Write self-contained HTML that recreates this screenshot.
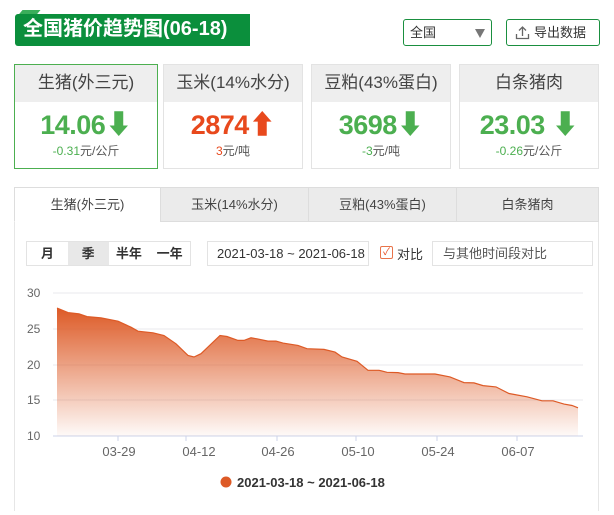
<!DOCTYPE html>
<html><head><meta charset="utf-8"><style>
*{box-sizing:border-box;margin:0;padding:0}
body{width:614px;height:515px;background:#fff;font-family:"Liberation Sans","Noto Sans CJK SC",sans-serif;position:relative;overflow:hidden;color:#333}
.a{position:absolute}
.banner{left:15px;top:14px;width:235px;height:32px;background:#0b8f3c;border-radius:3px 0 0 3px;color:#fff;font-weight:bold;font-size:20px;line-height:30px;padding-left:8px}
.fold{left:20px;top:10px;width:18px;height:6px;background:#3aae5a;transform:skewX(-40deg)}
.sel{left:403px;top:19px;width:89px;height:27px;border:1px solid #1a8f3f;border-radius:3px;font-size:13px;line-height:25px;padding-left:6px}
.tri{right:6px;top:9px;border-left:5px solid transparent;border-right:5px solid transparent;border-top:9px solid #777}
.exp{left:506px;top:19px;width:94px;height:27px;border:1px solid #1a8f3f;border-radius:3px;font-size:13px;line-height:25px;padding-left:27px}
.card{top:64px;height:105px;border:1px solid #e3e3e3;text-align:center}
.card .h{height:37px;background:#eeeeee;font-size:17px;line-height:36px;color:#444}
.card .v{font-size:27px;font-weight:bold;margin-top:8px;line-height:30px;letter-spacing:-0.5px}
.card .s{font-size:12px;color:#555;margin-top:2px}
.g{color:#4caf50}.r{color:#e8491d}
.tab{top:187px;height:35px;background:#ebebeb;border:1px solid #ddd;font-size:13px;text-align:center;line-height:34px;color:#444}
.box{left:14px;top:221px;width:585px;height:290px;border:1px solid #e6e6e6;border-bottom:none}
.bg{left:26px;top:241px;width:165px;height:25px;border:1px solid #e3e3e3;font-size:13px;font-weight:bold;display:flex}
.bg span{flex:1;text-align:center;line-height:23px}
.inp{top:241px;height:25px;border:1px solid #e3e3e3;font-size:13px;line-height:23px;padding-left:8px}
</style></head><body>
<div class="a fold"></div>
<div class="a banner">全国猪价趋势图(06-18)</div>
<div class="a sel">全国<div class="a tri"></div></div>
<div class="a exp"><svg class="a" style="left:8px;top:5px" width="15" height="15" viewBox="0 0 15 15" fill="none" stroke="#666" stroke-width="1.3"><path d="M7.5 11V2M4 5.5L7.5 2 11 5.5M1.5 9v4.5h12V9"/></svg>导出数据</div>

<div class="a card" style="left:14px;width:144px;border-color:#4caf50"><div class="h">生猪(外三元)</div><div class="v g">14.06⬇</div><div class="s"><span class="g">-0.31</span>元/公斤</div></div>
<div class="a card" style="left:163px;width:140px"><div class="h">玉米(14%水分)</div><div class="v r">2874⬆</div><div class="s"><span class="r">3</span>元/吨</div></div>
<div class="a card" style="left:311px;width:140px"><div class="h">豆粕(43%蛋白)</div><div class="v g">3698⬇</div><div class="s"><span class="g">-3</span>元/吨</div></div>
<div class="a card" style="left:459px;width:140px"><div class="h">白条猪肉</div><div class="v g">23.03 ⬇</div><div class="s"><span class="g">-0.26</span>元/公斤</div></div>

<div class="a box"></div>
<div class="a tab" style="left:14px;width:147px;background:#fff;border-bottom-color:#fff">生猪(外三元)</div>
<div class="a tab" style="left:160px;width:149px">玉米(14%水分)</div>
<div class="a tab" style="left:308px;width:149px">豆粕(43%蛋白)</div>
<div class="a tab" style="left:456px;width:143px">白条猪肉</div>

<div class="a bg"><span>月</span><span style="background:#e8e8e8">季</span><span>半年</span><span>一年</span></div>
<div class="a inp" style="left:207px;width:162px;padding-left:9px">2021-03-18 ~ 2021-06-18</div>
<div class="a" style="left:380px;top:246px;width:13px;height:13px;border:1px solid #e8734a;border-radius:2px;color:#e8491d;font-size:10px;line-height:11px;text-align:center">✓</div>
<div class="a" style="left:397px;top:244px;font-size:13px">对比</div>
<div class="a inp" style="left:432px;width:161px;padding-left:10px;color:#555">与其他时间段对比</div>

<svg class="a" style="left:0;top:280px" width="614" height="235">
<defs><linearGradient id="gr" x1="0" y1="0" x2="0" y2="1"><stop offset="0" stop-color="#dd5a26"/><stop offset="1" stop-color="#dd5a26" stop-opacity="0.03"/></linearGradient></defs>
<g font-size="12" fill="#666" font-family="Liberation Sans,sans-serif">
<text x="27" y="17">30</text><text x="27" y="53">25</text><text x="27" y="89">20</text><text x="27" y="124">15</text><text x="27" y="160">10</text>
</g>
<g stroke="#e8e8ee" stroke-width="1"><path d="M53 13H583M53 49H583M53 85H583M53 120H583"/></g>
<path d="M53 156H583" stroke="#ccd3e8"/>
<g stroke="#ccd3e8"><path d="M118 156v5M186 156v5M277 156v5M356 156v5M437 156v5M517 156v5"/></g>
<g transform="translate(0,-280)">
<path d="M57 308L68 312.6 79 313.9 87 316.6 101 317.9 118 321.2 131 327.2 138 331.2 153 332.8 164 335.5 176 343.8 188 355.4 194 357 201 353.7 220 335.5 227 336.5 238 340.4 244 340.4 251 337.8 257 338.8 268 341.1 276 341.1 283 343.1 298 345.4 307 348.7 324 349.4 335 352.1 342 357 357 361.3 368 370.3 379 370.3 387 372.3 398 372.6 405 374 435 374 450 376.9 464 382.6 474 382.9 483 385.6 496 386.9 509 393.5 527 396.8 542 400.8 553 400.8 564 404.1 572 405.5 578 407.8 L578 436 L57 436Z" fill="url(#gr)"/>
<path d="M57 308L68 312.6 79 313.9 87 316.6 101 317.9 118 321.2 131 327.2 138 331.2 153 332.8 164 335.5 176 343.8 188 355.4 194 357 201 353.7 220 335.5 227 336.5 238 340.4 244 340.4 251 337.8 257 338.8 268 341.1 276 341.1 283 343.1 298 345.4 307 348.7 324 349.4 335 352.1 342 357 357 361.3 368 370.3 379 370.3 387 372.3 398 372.6 405 374 435 374 450 376.9 464 382.6 474 382.9 483 385.6 496 386.9 509 393.5 527 396.8 542 400.8 553 400.8 564 404.1 572 405.5 578 407.8" fill="none" stroke="#dd5a26" stroke-width="1.2"/>
</g>
<g font-size="13" fill="#666" font-family="Liberation Sans,sans-serif" text-anchor="middle">
<text x="119" y="176">03-29</text><text x="199" y="176">04-12</text><text x="278" y="176">04-26</text><text x="358" y="176">05-10</text><text x="438" y="176">05-24</text><text x="518" y="176">06-07</text>
</g>
<circle cx="226" cy="202" r="5.5" fill="#dd5a26"/>
<text x="237" y="207" font-size="13" font-weight="bold" fill="#333" font-family="Liberation Sans,sans-serif">2021-03-18 ~ 2021-06-18</text>
</svg>
</body></html>
